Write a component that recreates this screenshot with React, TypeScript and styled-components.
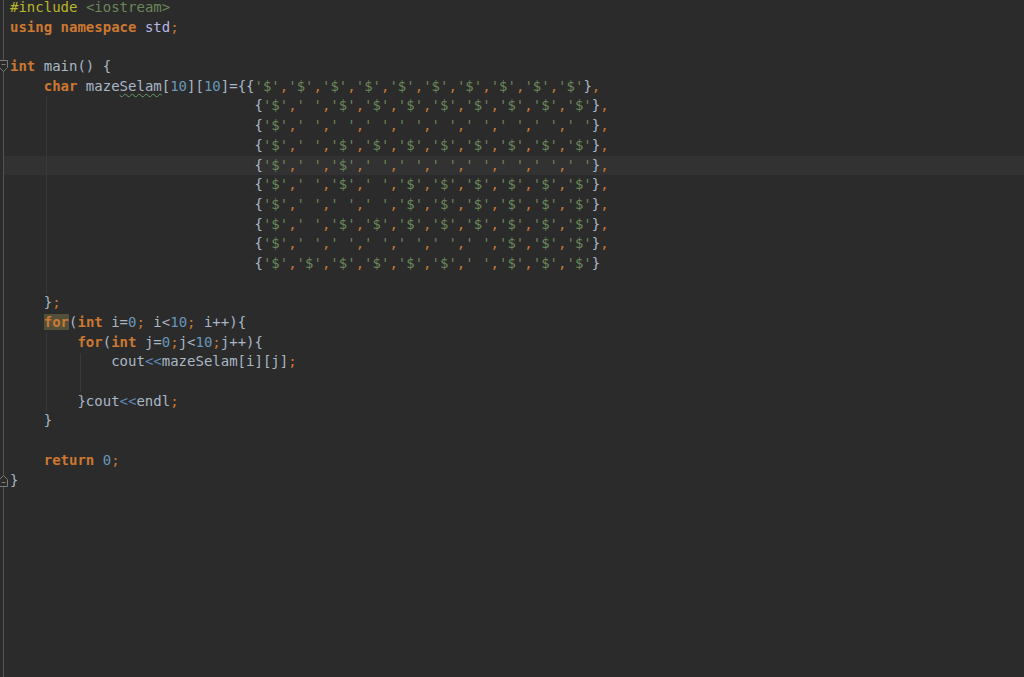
import React from "react";
import styled, { createGlobalStyle, css } from "styled-components";

const LH = 19.7;

const GlobalStyle = createGlobalStyle`
  html, body {
    margin: 0;
    padding: 0;
    background: #2b2b2b;
    overflow: hidden;
  }
`;

const Editor = styled.div`
  display: flex;
  width: 1024px;
  height: 677px;
  overflow: hidden;
  background: #2b2b2b;
  font-family: "DejaVu Sans Mono", "Liberation Mono", monospace;
  font-size: 14px;
  color: #a9b7c6;
`;

const Gutter = styled.div`
  position: relative;
  width: 3px;
  flex: none;
  border-right: 1px solid #535353;
`;

const FoldMark = styled.svg<{ $top: number }>`
  position: absolute;
  left: -1px;
  top: ${(p) => p.$top}px;
  width: 10px;
  height: 13px;
`;

const Code = styled.div`
  position: relative;
  flex: 1;
  margin-top: -2px;
`;

const Line = styled.div<{ $current?: boolean }>`
  height: ${LH}px;
  line-height: ${LH}px;
  padding-left: 6px;
  white-space: pre;
  ${(p) =>
    p.$current &&
    css`
      background: #323232;
    `}
`;

const Guide = styled.div<{ $left: number; $from: number; $to: number }>`
  position: absolute;
  left: ${(p) => p.$left}px;
  top: ${(p) => p.$from * LH}px;
  height: ${(p) => (p.$to - p.$from) * LH}px;
  width: 1px;
  background: #393939;
`;

const Kw = styled.span<{ $mark?: boolean }>`
  color: #cc7832;
  font-weight: bold;
  ${(p) =>
    p.$mark &&
    css`
      background: #52503a;
    `}
`;
const Str = styled.span`
  color: #6a8759;
`;
const Num = styled.span`
  color: #6897bb;
`;
const Punct = styled.span`
  color: #cc7832;
`;
const Pre = styled.span`
  color: #bbb529;
`;
const Ns = styled.span`
  color: #b5b6e3;
`;
const Op = styled.span`
  color: #5f8ab5;
`;
const Typo = styled.span`
  text-decoration-line: underline;
  text-decoration-style: wavy;
  text-decoration-color: #659c6b;
  text-decoration-thickness: 1px;
  text-underline-offset: 2px;
`;

const rows = [
  "$$$$$$$$$$",
  "$ $$$$$$$$",
  "$         ",
  "$ $$$$$$$$",
  "$ $       ",
  "$ $ $$$$$$",
  "$   $$$$$$",
  "$ $$$$$$$$",
  "$      $$$",
  "$$$$$$ $$$",
];

const Row: React.FC<{ cells: string; last?: boolean }> = ({ cells, last }) => (
  <>
    {"{"}
    {cells.split("").map((c, i) => (
      <React.Fragment key={i}>
        {i > 0 && <Punct>,</Punct>}
        <Str>{`'${c}'`}</Str>
      </React.Fragment>
    ))}
    {"}"}
    {!last && <Punct>,</Punct>}
  </>
);

const FoldDown = ({ top }: { top: number }) => (
  <FoldMark $top={top} viewBox="0 0 10 13">
    <path d="M0.5 0.5 H8.5 V7.5 L4.5 11.5 L0.5 7.5 Z" fill="#2b2b2b" stroke="#7a7a7a" strokeWidth="1" />
    <path d="M2.5 4.5 H6.5" stroke="#7a7a7a" strokeWidth="1" />
  </FoldMark>
);

const FoldUp = ({ top }: { top: number }) => (
  <FoldMark $top={top} viewBox="0 0 10 13">
    <path d="M0.5 12.5 H8.5 V5.5 L4.5 1.5 L0.5 5.5 Z" fill="#2b2b2b" stroke="#7a7a7a" strokeWidth="1" />
    <path d="M2.5 8.5 H6.5" stroke="#7a7a7a" strokeWidth="1" />
  </FoldMark>
);

const pad = " ".repeat(29);

export default function App() {
  return (
    <>
      <GlobalStyle />
      <Editor>
        <Gutter>
          <FoldDown top={-2 + 3 * LH + 3} />
          <FoldUp top={-2 + 24 * LH + 3} />
        </Gutter>
        <Code>
          <Line>
            <Pre>#include</Pre> <Str>&lt;iostream&gt;</Str>
          </Line>
          <Line>
            <Kw>using namespace</Kw> <Ns>std</Ns>
            <Punct>;</Punct>
          </Line>
          <Line />
          <Line>
            <Kw>int</Kw> main() {"{"}
          </Line>
          <Line>
            {"    "}
            <Kw>char</Kw> maze<Typo>Selam</Typo>[<Num>10</Num>][<Num>10</Num>]={"{"}
            <Row cells={rows[0]} />
          </Line>
          {rows.slice(1).map((r, i) => (
            <Line key={i} $current={i === 3}>
              {pad}
              <Row cells={r} last={i === rows.length - 2} />
            </Line>
          ))}
          <Line />
          <Line>
            {"    }"}
            <Punct>;</Punct>
          </Line>
          <Line>
            {"    "}
            <Kw $mark>for</Kw>(<Kw>int</Kw> i=<Num>0</Num>
            <Punct>;</Punct> i&lt;<Num>10</Num>
            <Punct>;</Punct> i++){"{"}
          </Line>
          <Line>
            {"        "}
            <Kw>for</Kw>(<Kw>int</Kw> j=<Num>0</Num>
            <Punct>;</Punct>j&lt;<Num>10</Num>
            <Punct>;</Punct>j++){"{"}
          </Line>
          <Line>
            {"            "}cout<Op>&lt;&lt;</Op>mazeSelam[i][j]<Punct>;</Punct>
          </Line>
          <Line />
          <Line>
            {"        }"}cout<Op>&lt;&lt;</Op>endl<Punct>;</Punct>
          </Line>
          <Line>{"    }"}</Line>
          <Line />
          <Line>
            {"    "}
            <Kw>return</Kw> <Num>0</Num>
            <Punct>;</Punct>
          </Line>
          <Line>{"}"}</Line>
          <Guide $left={42} $from={5} $to={15} />
          <Guide $left={42} $from={17} $to={21} />
          <Guide $left={76} $from={18} $to={20} />
        </Code>
      </Editor>
    </>
  );
}
